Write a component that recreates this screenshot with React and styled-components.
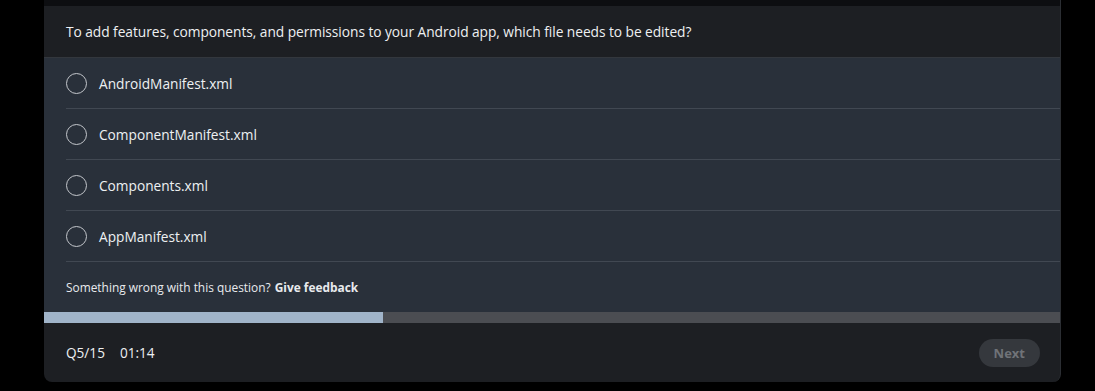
import React from 'react'
import styled, { createGlobalStyle } from 'styled-components';

const GlobalStyle = createGlobalStyle`
    html, body {
        margin: 0;
        padding: 0;
        background: #000;
    }
    body {
        font-family: "Open Sans", "Noto Sans", sans-serif;
        color: #e8eaed;
    }
`;

const Page = styled.div`
    width: 1095px;
    height: 391px;
    background: #000;
    padding-left: 44px;
    box-sizing: border-box;
`;

const Panel = styled.div`
    width: 1017px;
    height: 382px;
    display: flex;
    flex-direction: column;
    background: #1d1f23;
    border-right: 1px solid #2b2e33;
    border-radius: 0 0 8px 8px;
    overflow: hidden;
    box-sizing: border-box;
`;

const TopStrip = styled.div`
    height: 6px;
    flex: none;
    background: #0d0e11;
`;

const Question = styled.div`
    height: 51px;
    flex: none;
    display: flex;
    align-items: center;
    padding-left: 22px;
    font-size: 13.75px;
    letter-spacing: -0.05px;
    border-bottom: 1px solid #33373d;
    color: #eef0f2;
`;

const Options = styled.div`
    background: #29303a;
    display: flex;
    flex-direction: column;
    flex: none;
`;

const Option = styled.label`
    height: 50px;
    margin-left: 22px;
    display: flex;
    align-items: center;
    gap: 12px;
    font-size: 13.7px;
    color: #eef0f2;
    border-bottom: 1px solid #414852;
    cursor: pointer;
`;

const Radio = styled.span`
    width: 19px;
    height: 19px;
    border-radius: 50%;
    border: 1.5px solid #c4c7cc;
    flex: none;
`;

const Feedback = styled.div`
    height: 50px;
    flex: none;
    background: #29303a;
    display: flex;
    align-items: center;
    padding-left: 22px;
    font-size: 11.9px;
    color: #e8eaed;

    b {
        font-weight: 700;
        margin-left: 4px;
    }
`;

const Track = styled.div`
    height: 11px;
    flex: none;
    background: #4b4d52;
`;

const Fill = styled.div`
    height: 100%;
    background: #a0b4c9;
`;

const Footer = styled.div`
    flex: 1;
    display: flex;
    align-items: center;
    justify-content: space-between;
    padding: 0 20px 0 22px;
    font-size: 13.6px;
`;

const Stats = styled.div`
    display: flex;
    gap: 15px;
    color: #eef0f2;
`;

const NextButton = styled.button`
    height: 28px;
    padding: 0 15px;
    border: none;
    border-radius: 14px;
    background: #35383d;
    color: #707378;
    font-family: inherit;
    font-weight: 700;
    font-size: 13px;
`;

const answers = [
    'AndroidManifest.xml',
    'ComponentManifest.xml',
    'Components.xml',
    'AppManifest.xml',
];

const App = () => {
    const current = 5;
    const total = 15;

  return (
    <Page>
      <GlobalStyle/>
      <Panel>
        <TopStrip/>
        <Question>
            To add features, components, and permissions to your Android app, which file needs to be edited?
        </Question>
        <Options>
            {answers.map((a) => (
                <Option key={a}>
                    <Radio/>
                    {a}
                </Option>
            ))}
        </Options>
        <Feedback>
            Something wrong with this question?<b>Give feedback</b>
        </Feedback>
        <Track>
            <Fill style={{ width: `${(current / total) * 100}%` }}/>
        </Track>
        <Footer>
            <Stats>
                <span>Q{current}/{total}</span>
                <span>01:14</span>
            </Stats>
            <NextButton disabled>Next</NextButton>
        </Footer>
      </Panel>
    </Page>
  )
}

export default App;
